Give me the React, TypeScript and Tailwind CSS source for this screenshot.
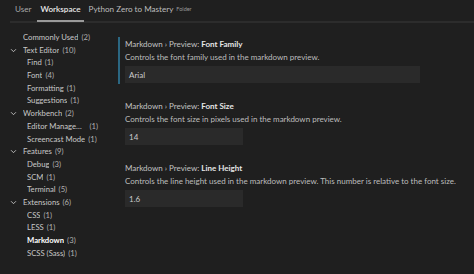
import React from "react";

const font = { fontFamily: 'Lato, "Noto Sans", sans-serif' };

type Row = { label: string; count: number; level: 1 | 2; chevron?: boolean; bold?: boolean };

const rows: Row[] = [
  { label: "Commonly Used", count: 2, level: 1 },
  { label: "Text Editor", count: 10, level: 1, chevron: true },
  { label: "Find", count: 1, level: 2 },
  { label: "Font", count: 4, level: 2 },
  { label: "Formatting", count: 1, level: 2 },
  { label: "Suggestions", count: 1, level: 2 },
  { label: "Workbench", count: 2, level: 1, chevron: true },
  { label: "Editor Management", count: 1, level: 2 },
  { label: "Screencast Mode", count: 1, level: 2 },
  { label: "Features", count: 9, level: 1, chevron: true },
  { label: "Debug", count: 3, level: 2 },
  { label: "SCM", count: 1, level: 2 },
  { label: "Terminal", count: 5, level: 2 },
  { label: "Extensions", count: 6, level: 1, chevron: true },
  { label: "CSS", count: 1, level: 2 },
  { label: "LESS", count: 1, level: 2 },
  { label: "Markdown", count: 3, level: 2, bold: true },
  { label: "SCSS (Sass)", count: 1, level: 2 },
];

function Chevron() {
  return (
    <svg width="7" height="7" viewBox="0 0 10 10" className="shrink-0">
      <path d="M1.5 3.2 L5 6.7 L8.5 3.2" fill="none" stroke="#c5c5c5" strokeWidth="1.3" />
    </svg>
  );
}

type Setting = { name: string; desc: string; value: string; wide?: boolean; focused?: boolean };

const settings: Setting[] = [
  { name: "Font Family", desc: "Controls the font family used in the markdown preview.", value: "Arial", wide: true, focused: true },
  { name: "Font Size", desc: "Controls the font size in pixels used in the markdown preview.", value: "14" },
  {
    name: "Line Height",
    desc: "Controls the line height used in the markdown preview. This number is relative to the font size.",
    value: "1.6",
  },
];

export default function App() {
  return (
    <div className="w-[474px] h-[274px] bg-[#1f1f1f] overflow-hidden text-[#cccccc]" style={font}>
      {/* Tabs */}
      <div className="flex items-end h-[23px] pl-[10px]">
        <div className="flex items-end w-full border-b-2 border-[#2c2c2c] h-[23px]">
          <div className="flex items-center h-full text-[8.1px] pl-[5px]">
            <div className="h-full flex items-center pr-[6px] pb-[2px] text-[#a8a8a8]">User</div>
            <div className="h-full flex items-center px-[3px] pb-[2px] text-[#e8e8e8] font-semibold border-b-2 border-[#9a9a9a] -mb-[2px]">
              Workspace
            </div>
            <div className="h-full flex items-center pl-[5px] pb-[2px] text-[#bdbdbd]">
              Python Zero to Mastery
              <span className="text-[5.5px] ml-[3px] text-[#9a9a9a]">Folder</span>
            </div>
          </div>
        </div>
      </div>

      <div className="flex">
        {/* Tree */}
        <div className="w-[118px] shrink-0 pt-[8px] pl-[10px] pr-[20px]">
          {rows.map((r) => (
            <div key={r.label} className="flex items-center h-[12.7px] text-[7.7px] leading-[12.7px] whitespace-nowrap">
              <div className="w-[13px] shrink-0 flex items-center">{r.chevron ? <Chevron /> : null}</div>
              <div className={`flex min-w-0 ${r.level === 2 ? "pl-[4px]" : ""}`}>
                <span className={`truncate ${r.bold ? "font-bold text-white" : "text-[#c8c8c8]"}`}>{r.label}</span>
                <span className="shrink-0 pl-[3px] text-[#b0b0b0]">({r.count})</span>
              </div>
            </div>
          ))}
        </div>

        {/* Settings */}
        <div className="flex flex-col gap-[15px] pt-[14px]">
          {settings.map((s) => (
            <div
              key={s.name}
              className={`border-l-2 pl-[5px] pb-[1px] ${s.focused ? "border-[#2b6782]" : "border-transparent"}`}
            >
              <div className="text-[8px] leading-[12.5px] whitespace-nowrap pt-[1px]">
                <span className="text-[#c2c2c2]">Markdown › Preview: </span>
                <span className="font-bold text-[#e6e6e6]">{s.name}</span>
              </div>
              <div className="text-[8px] leading-[12.5px] whitespace-nowrap text-[#bdbdbd]">{s.desc}</div>
              <div
                className={`mt-[3px] h-[17px] bg-[#2a2a2a] flex items-center pl-[4px] text-[8px] text-[#cccccc] ${
                  s.wide ? "w-[295px]" : "w-[118px]"
                }`}
              >
                {s.value}
              </div>
            </div>
          ))}
        </div>
      </div>
    </div>
  );
}
